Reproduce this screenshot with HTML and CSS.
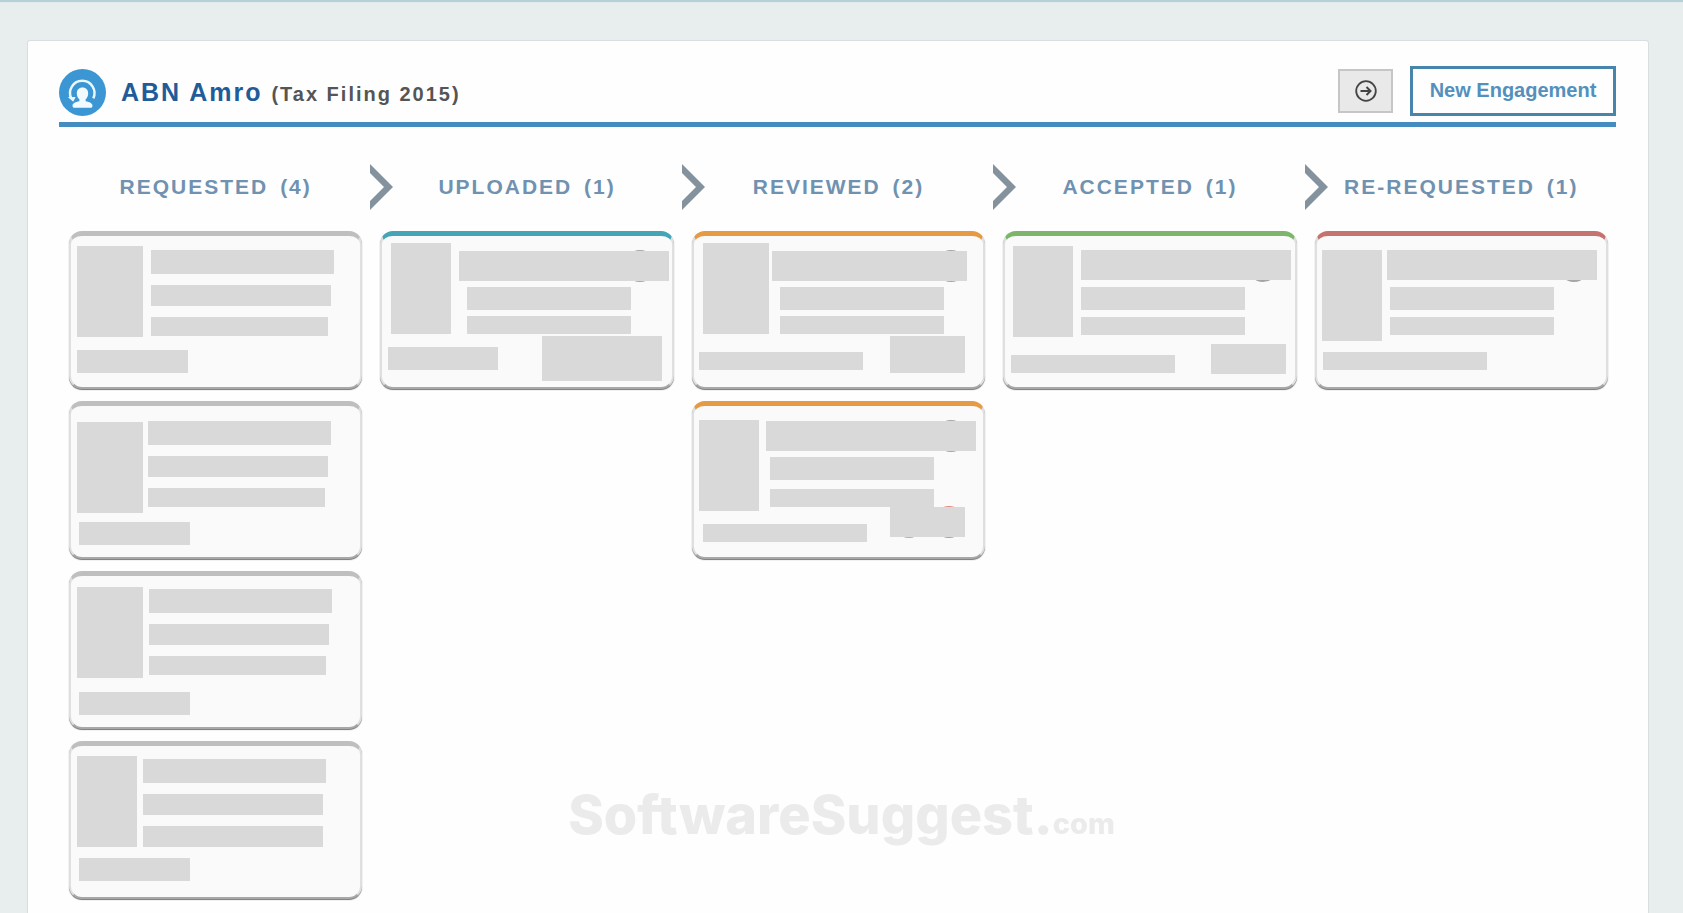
FILE: index.html
```html
<!DOCTYPE html>
<html lang="en">
<head>
    <meta charset="UTF-8">
    <meta name="viewport" content="width=device-width, initial-scale=1.0">
    <title>ABN Amro - Tax Filing 2015</title>
    <link rel="stylesheet" href="styles.css">
</head>
<body>
    <main class="panel">
        <header class="panel-header">
            <svg class="client-icon" viewBox="0 0 48 48" aria-hidden="true">
                <circle cx="24" cy="24" r="24" fill="#3b96d3"/>
                <path d="M12.500 30 A12.500 12.500 0 1 1 35 30" fill="none" stroke="#e9f8ff" stroke-width="2.500"/>
                <path d="M9 28.500 L17 28.500 L14.500 33.500 Z" fill="#e9f8ff"/>
                <path d="M24 19 c-3.800 0 -5.800 2.500 -5.800 6 c0 2.500 1 4.500 2.600 6 v2 c-4 .8 -7 2 -7 4.500 c0 1.500 1 2.200 2.500 2.200 h15.400 c1.500 0 2.500 -.7 2.500 -2.200 c0 -2.500 -3 -3.700 -7 -4.500 v-2 c1.600 -1.500 2.600 -3.500 2.600 -6 c0 -3.500 -2 -6 -5.800 -6z" fill="#f1fbff"/>
            </svg>
            <h1>ABN Amro <small>(Tax Filing 2015)</small></h1>
            <button class="btn-go" type="button" aria-label="Go">
                <svg viewBox="0 0 22 22" fill="none" stroke="#444" stroke-width="2">
                    <circle cx="11" cy="11" r="9.800" stroke-width="1.800"/>
                    <path d="M5.500 11 H15.500 M11.500 7 L15.500 11 L11.500 15"/>
                </svg>
            </button>
            <button class="btn-new" type="button">New Engagement</button>
        </header>

        <div class="board">
            <section class="column requested">
                <div class="column-head">
                    <h2>REQUESTED <span>(4)</span></h2>
                </div>
                <div class="card card-1">
                    <div class="card-body">
                        <div class="block thumb"></div>
                        <div class="lines">
                            <div class="block title"></div>
                            <div class="block line"></div>
                            <div class="block line short"></div>
                        </div>
                    </div>
                    <div class="card-foot"><div class="block tag"></div></div>
                </div>
                <div class="card card-2">
                    <div class="card-body">
                        <div class="block thumb"></div>
                        <div class="lines">
                            <div class="block title"></div>
                            <div class="block line"></div>
                            <div class="block line short"></div>
                        </div>
                    </div>
                    <div class="card-foot"><div class="block tag"></div></div>
                </div>
                <div class="card card-3">
                    <div class="card-body">
                        <div class="block thumb"></div>
                        <div class="lines">
                            <div class="block title"></div>
                            <div class="block line"></div>
                            <div class="block line short"></div>
                        </div>
                    </div>
                    <div class="card-foot"><div class="block tag"></div></div>
                </div>
                <div class="card card-4">
                    <div class="card-body">
                        <div class="block thumb"></div>
                        <div class="lines">
                            <div class="block title"></div>
                            <div class="block line"></div>
                            <div class="block line"></div>
                        </div>
                    </div>
                    <div class="card-foot"><div class="block tag"></div></div>
                </div>
            </section>

            <section class="column uploaded">
                <div class="column-head">
                    <svg class="chevron" viewBox="0 0 23 46"><path d="M0 0 L23 23 L0 46 V37 L14 23 L0 9 Z"/></svg>
                    <h2>UPLOADED <span>(1)</span></h2>
                </div>
                <div class="card card-5">
                    <span class="avatar"></span>
                    <div class="card-body">
                        <div class="block thumb"></div>
                        <div class="lines">
                            <div class="block title"></div>
                            <div class="block line indent"></div>
                            <div class="block line short indent"></div>
                        </div>
                    </div>
                    <div class="card-foot">
                        <div class="block tag"></div>
                        <div class="block actions"></div>
                    </div>
                </div>
            </section>

            <section class="column reviewed">
                <div class="column-head">
                    <svg class="chevron" viewBox="0 0 23 46"><path d="M0 0 L23 23 L0 46 V37 L14 23 L0 9 Z"/></svg>
                    <h2>REVIEWED <span>(2)</span></h2>
                </div>
                <div class="card card-6">
                    <span class="avatar"></span>
                    <div class="card-body">
                        <div class="block thumb"></div>
                        <div class="lines">
                            <div class="block title"></div>
                            <div class="block line indent"></div>
                            <div class="block line short indent"></div>
                        </div>
                    </div>
                    <div class="card-foot">
                        <div class="block tag"></div>
                        <div class="block actions"></div>
                    </div>
                </div>
                <div class="card card-7">
                    <span class="avatar"></span>
                    <span class="dot accept"></span>
                    <span class="dot reject"></span>
                    <div class="card-body">
                        <div class="block thumb"></div>
                        <div class="lines">
                            <div class="block title"></div>
                            <div class="block line"></div>
                            <div class="block line short"></div>
                        </div>
                    </div>
                    <div class="card-foot">
                        <div class="block tag"></div>
                        <div class="block actions"></div>
                    </div>
                </div>
            </section>

            <section class="column accepted">
                <div class="column-head">
                    <svg class="chevron" viewBox="0 0 23 46"><path d="M0 0 L23 23 L0 46 V37 L14 23 L0 9 Z"/></svg>
                    <h2>ACCEPTED <span>(1)</span></h2>
                </div>
                <div class="card card-8">
                    <span class="avatar"></span>
                    <div class="card-body">
                        <div class="block thumb"></div>
                        <div class="lines">
                            <div class="block title"></div>
                            <div class="block line"></div>
                            <div class="block line short"></div>
                        </div>
                    </div>
                    <div class="card-foot">
                        <div class="block tag"></div>
                        <div class="block actions"></div>
                    </div>
                </div>
            </section>

            <section class="column rerequested">
                <div class="column-head">
                    <svg class="chevron" viewBox="0 0 23 46"><path d="M0 0 L23 23 L0 46 V37 L14 23 L0 9 Z"/></svg>
                    <h2>RE-REQUESTED <span>(1)</span></h2>
                </div>
                <div class="card card-9">
                    <span class="avatar"></span>
                    <div class="card-body">
                        <div class="block thumb"></div>
                        <div class="lines">
                            <div class="block title"></div>
                            <div class="block line"></div>
                            <div class="block line short"></div>
                        </div>
                    </div>
                    <div class="card-foot"><div class="block tag"></div></div>
                </div>
            </section>
        </div>
    </main>
    <div class="watermark">SoftwareSuggest.<small>com</small></div>
</body>
</html>
```
FILE: styles.css
```css
* {
    box-sizing: border-box;
}

body {
    margin: 0;
    min-height: 100vh;
    display: flex;
    flex-direction: column;
    background: linear-gradient(#cfdade, #e8eeee 3px);
    border-top: 2px solid #b5cfdb;
    font-family: "Liberation Sans", Arial, sans-serif;
}

.panel {
    flex: 1;
    margin: 38px 34px 0 27px;
    padding: 25px 32px 12px 31px;
    background: #fefefe;
    border: 1px solid #dadee1;
    border-bottom: none;
    border-radius: 3px 3px 0 0;
}

.panel-header {
    display: flex;
    align-items: center;
    padding-bottom: 6px;
    border-bottom: 5px solid #458dc0;
}

.client-icon {
    width: 47px;
    height: 47px;
    margin: 2px 15px 0 0;
}

h1 {
    flex: 1;
    margin: 2px 0 0;
    font-size: 25px;
    letter-spacing: 2px;
    color: #1f5c99;
}

h1 small {
    font-size: 20px;
    color: #555;
}

.btn-go {
    display: flex;
    align-items: center;
    justify-content: center;
    width: 55px;
    height: 44px;
    margin-right: 17px;
    padding: 0;
    background: #e9e9ea;
    border: 2px solid #c6c6c9;
    cursor: pointer;
}

.btn-go svg {
    width: 22px;
    height: 22px;
}

.btn-new {
    width: 206px;
    height: 50px;
    padding: 0 0 1px;
    background: #fefefe;
    border: 3px solid #4785ad;
    font-family: inherit;
    font-size: 20px;
    font-weight: bold;
    color: #5390bd;
    cursor: pointer;
}

.board {
    display: grid;
    grid-template-columns: repeat(5, 1fr);
    gap: 18px;
    padding: 37px 8px 0 10px;
}

.column {
    display: flex;
    flex-direction: column;
    gap: 12px;
}

/* the head spans half of the gap on each side, so the chevron sits between columns */
.column-head {
    display: grid;
    grid-template-columns: 23px 1fr 23px;
    align-items: center;
    height: 46px;
    margin: 0 -10px 9px;
}

.chevron {
    width: 23px;
    height: 46px;
    fill: #84929e;
}

h2 {
    grid-column: 2;
    margin: 0;
    text-align: center;
    white-space: nowrap;
    font-size: 21px;
    letter-spacing: 2px;
    color: #7092b0;
}

h2 span {
    margin-left: 4px;
}

.card {
    position: relative;
    height: 158px;
    background: #fafafa;
    border: 2px solid #dfdfdf;
    border-top: 5px solid #bfbfbf;
    border-bottom-color: #a8a8a8;
    border-radius: 13px;
    box-shadow: 0 1px 1px #777;
}

.uploaded .card {
    border-top-color: #45a5b7;
}

.reviewed .card {
    border-top-color: #e59a43;
}

.accepted .card {
    border-top-color: #7db66b;
}

.rerequested .card {
    border-top-color: #c4736f;
}

.card-body {
    display: flex;
    align-items: flex-start;
    height: 100px;
}

.card-foot {
    display: flex;
    justify-content: space-between;
    align-items: flex-start;
}

/* placeholder blocks */
.block {
    position: relative;
    background: #d9d9d9;
}

.thumb {
    flex: none;
    width: 60px;
    height: 91px;
    margin: 10px 8px 0 6px;
}

.lines {
    display: flex;
    flex-direction: column;
    gap: 7px;
    margin-top: 14px;
}

.title {
    width: 210px;
    height: 30px;
}

.line {
    width: 164px;
    height: 23px;
}

.line.short {
    height: 18px;
}

.line.indent {
    margin-left: 8px;
}

.tag {
    width: 164px;
    height: 18px;
    margin: 16px 0 0 6px;
}

.actions {
    width: 75px;
    height: 30px;
    margin-right: 18px;
}

.requested .lines {
    gap: 11px;
}

.requested .title {
    width: 183px;
    height: 24px;
}

.requested .line {
    width: 180px;
    height: 21px;
}

.requested .short {
    width: 177px;
    height: 19px;
}

.requested .tag {
    width: 111px;
    height: 23px;
    margin-left: 8px;
}

.card-1 .thumb,
.card-2 .thumb,
.card-3 .thumb,
.card-6 .thumb {
    width: 66px;
}

.requested .card-1 .tag {
    margin: 14px 0 0 6px;
}

.card-2 .thumb {
    margin: 16px 5px 0 6px;
}

.card-2 .lines {
    margin-top: 15px;
}

.card-3 .thumb {
    margin: 11px 6px 0 6px;
}

.card-3 .lines,
.card-4 .lines {
    margin-top: 13px;
}

.card-4 .thumb {
    margin: 10px 6px 0 6px;
}

.card-4 .tag {
    margin-top: 12px;
}

.card-5 .thumb {
    margin: 7px 8px 0 9px;
}

.card-5 .lines,
.card-6 .lines,
.card-7 .lines {
    gap: 6px;
    margin-top: 15px;
}

.card-5 .tag {
    width: 110px;
    height: 23px;
    margin-top: 11px;
}

.card-5 .actions {
    width: 120px;
    height: 45px;
    margin-right: 10px;
}

.card-6 .thumb {
    margin: 7px 3px 0 9px;
}

.card-6 .title {
    width: 195px;
}

.card-6 .tag {
    margin-left: 5px;
}

.card-6 .actions {
    height: 37px;
}

.card-7 .thumb {
    margin: 14px 7px 0 5px;
}

.card-7 .line {
    margin-left: 4px;
}

.card-7 .short {
    margin-top: 3px;
}

.card-7 .tag {
    margin: 18px 0 0 9px;
}

.card-7 .actions {
    margin-top: 1px;
}

.card-8 .thumb {
    margin-left: 8px;
}

.card-8 .tag {
    margin-top: 19px;
}

.card-8 .actions {
    margin: 8px 9px 0 0;
}

.card-9 .thumb {
    margin: 14px 5px 0 5px;
}

.card-9 .line {
    margin-left: 3px;
}

/* round badges behind the blocks */
.avatar,
.dot {
    position: absolute;
    top: 14px;
    right: 16px;
    width: 32px;
    height: 32px;
    border: 2px solid #a5a5a5;
    border-radius: 50%;
}

.dot {
    top: 100px;
}

.accept {
    right: 58px;
    border-color: #8cc97c;
}

.reject {
    right: 18px;
    border-color: #e08a80;
}

.watermark {
    position: fixed;
    left: 0;
    right: 0;
    bottom: 57px;
    text-align: center;
    font-family: Inter, sans-serif;
    font-size: 54px;
    line-height: 64px;
    font-weight: 800;
    color: #ebebeb;
    pointer-events: none;
}

.watermark small {
    font-size: 29px;
}
```
